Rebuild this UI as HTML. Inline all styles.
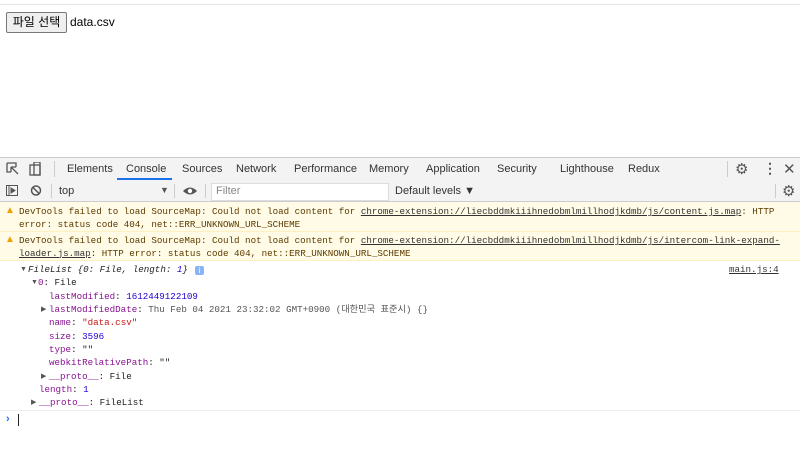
<!DOCTYPE html>
<html><head><meta charset="utf-8"><style>
body{margin:0;width:800px;height:460px;overflow:hidden;background:#fff;font-family:"Liberation Sans",sans-serif;position:relative}
.abs{position:absolute}
.mono{font-family:"Liberation Mono",monospace;font-size:9.2px;white-space:pre}
.l{position:absolute;font-family:"Liberation Mono",monospace;font-size:9.2px;white-space:pre;line-height:12px;color:#222}
.tab{position:absolute;top:163px;font-size:11px;color:#333}
.u{text-decoration:underline;color:#333}
.p{color:#881391}.n{color:#1c00cf}.s{color:#c41a16}.g{color:#555}
.tri{position:absolute;font-size:7px;color:#555;line-height:12px}
</style></head><body>
<div class="abs" style="left:0;top:4px;width:800px;height:1px;background:#e6e6e6"></div>
<div class="abs" style="left:6px;top:12px;width:59px;height:19px;border:1px solid #777;border-radius:2px;background:#efefef;font-family:'Liberation Sans','Noto Sans CJK KR',sans-serif;font-size:12px;line-height:19px;text-align:center">파일 선택</div>
<div class="abs" style="left:70px;top:15px;font-size:12px">data.csv</div>

<div class="abs" style="left:0;top:157px;width:800px;height:24px;background:#f3f3f3;border-top:1px solid #ccc;border-bottom:1px solid #ccc"></div>
<svg class="abs" style="left:6px;top:162px" width="40" height="14"><path d="M1 1h9v4M1 1v9h4M5 5l7 7M5 5v5M5 5h5" stroke="#555" fill="none" stroke-width="1.3"/><rect x="24" y="3" width="10" height="10" fill="none" stroke="#555" stroke-width="1.3"/><rect x="28" y="0" width="6" height="13" fill="none" stroke="#555" stroke-width="1.3"/></svg>
<div class="abs" style="left:54px;top:161px;width:1px;height:16px;background:#ccc"></div>
<div class="tab" style="left:67px">Elements</div>
<div class="tab" style="left:126px">Console</div>
<div class="abs" style="left:117px;top:178px;width:55px;height:2px;background:#1a73e8"></div>
<div class="tab" style="left:182px">Sources</div>
<div class="tab" style="left:236px">Network</div>
<div class="tab" style="left:294px">Performance</div>
<div class="tab" style="left:369px">Memory</div>
<div class="tab" style="left:426px">Application</div>
<div class="tab" style="left:497px">Security</div>
<div class="tab" style="left:560px">Lighthouse</div>
<div class="tab" style="left:628px">Redux</div>
<div class="abs" style="left:727px;top:161px;width:1px;height:16px;background:#ccc"></div>
<div class="abs" style="left:735px;top:160px;font-size:15px;color:#555">⚙</div>
<div class="abs" style="left:763px;top:160px;font-size:14px;color:#555;font-weight:bold">⋮</div>
<div class="abs" style="left:783px;top:160px;font-size:15px;color:#555">✕</div>

<div class="abs" style="left:0;top:182px;width:800px;height:19px;background:#f3f3f3;border-bottom:1px solid #ccc"></div>
<svg class="abs" style="left:6px;top:184px" width="40" height="14"><rect x="0.5" y="1.5" width="11" height="10" fill="none" stroke="#555"/><path d="M3 2v9M5 4l4 2.5-4 2.5z" stroke="#555" fill="#555"/><circle cx="30" cy="6.5" r="4.5" fill="none" stroke="#555" stroke-width="1.5"/><path d="M27 3.5l6 6" stroke="#555" stroke-width="1.5"/></svg>
<div class="abs" style="left:51px;top:184px;width:1px;height:14px;background:#ccc"></div>
<div class="abs" style="left:59px;top:185px;font-size:11px;color:#333">top</div>
<div class="abs" style="left:160px;top:185px;font-size:9px;color:#555">▼</div>
<div class="abs" style="left:174px;top:184px;width:1px;height:14px;background:#ccc"></div>
<svg class="abs" style="left:182px;top:186px" width="16" height="10"><path d="M1 5Q8-2 15 5Q8 12 1 5z" fill="#555"/><circle cx="8" cy="5" r="2.2" fill="#fff"/></svg>
<div class="abs" style="left:205px;top:184px;width:1px;height:14px;background:#ccc"></div>
<div class="abs" style="left:211px;top:183px;width:176px;height:16px;background:#fff;border:1px solid #ddd"></div>
<div class="abs" style="left:216px;top:185px;font-size:11px;color:#888">Filter</div>
<div class="abs" style="left:395px;top:185px;font-size:11px;color:#333">Default levels ▼</div>
<div class="abs" style="left:775px;top:184px;width:1px;height:14px;background:#ccc"></div>
<div class="abs" style="left:782px;top:182px;font-size:15px;color:#555">⚙</div>

<div class="abs" style="left:0;top:202px;width:800px;height:29px;background:#fffbe6;border-bottom:1px solid #fff0c0"></div>
<div class="abs" style="left:0;top:232px;width:800px;height:28px;background:#fffbe6;border-bottom:1px solid #fff0c0"></div>
<div class="abs" style="left:5px;top:205px;font-size:10px;color:#f0a000">▲</div>
<div class="abs" style="left:5px;top:234px;font-size:10px;color:#f0a000">▲</div>
<div class="abs mono" style="left:19px;top:206px;line-height:12.5px;color:#5c3b00">DevTools failed to load SourceMap: Could not load content for <span class="u">chrome-extension://liecbddmkiiihnedobmlmillhodjkdmb/js/content.js.map</span>: HTTP
error: status code 404, net::ERR_UNKNOWN_URL_SCHEME</div>
<div class="abs mono" style="left:19px;top:235px;line-height:12.5px;color:#5c3b00">DevTools failed to load SourceMap: Could not load content for <span class="u">chrome-extension://liecbddmkiiihnedobmlmillhodjkdmb/js/intercom-link-expand-</span>
<span class="u">loader.js.map</span>: HTTP error: status code 404, net::ERR_UNKNOWN_URL_SCHEME</div>

<div class="tri" style="left:20px;top:264px">▼</div>
<div class="l" style="left:28px;top:264px"><i>FileList {0: File, length: <span class="n">1</span>}</i></div>
<div class="abs" style="left:195px;top:266px;width:9px;height:9px;background:#8ab4f8;border-radius:2px;color:#fff;font-size:8px;line-height:9px;text-align:center">i</div>
<div class="tri" style="left:31px;top:277px">▼</div>
<div class="l" style="left:38px;top:277px"><span class="p">0</span>: File</div>
<div class="l" style="left:49px;top:291px"><span class="p">lastModified</span>: <span class="n">1612449122109</span></div>
<div class="tri" style="left:41px;top:304px">▶</div>
<div class="l" style="left:49px;top:304px"><span class="p">lastModifiedDate</span>: <span class="g">Thu Feb 04 2021 23:32:02 GMT+0900 (<span style="font-family:'Liberation Mono','Noto Sans CJK KR',monospace">대한민국 표준시</span>) {}</span></div>
<div class="l" style="left:49px;top:317px"><span class="p">name</span>: <span class="s">"data.csv"</span></div>
<div class="l" style="left:49px;top:331px"><span class="p">size</span>: <span class="n">3596</span></div>
<div class="l" style="left:49px;top:344px"><span class="p">type</span>: ""</div>
<div class="l" style="left:49px;top:357px"><span class="p">webkitRelativePath</span>: ""</div>
<div class="tri" style="left:41px;top:371px">▶</div>
<div class="l" style="left:49px;top:371px"><span class="p">__proto__</span>: File</div>
<div class="l" style="left:39px;top:384px"><span class="p">length</span>: <span class="n">1</span></div>
<div class="tri" style="left:31px;top:397px">▶</div>
<div class="l" style="left:39px;top:397px"><span class="p">__proto__</span>: FileList</div>
<div class="abs mono u" style="left:729px;top:264px">main.js:4</div>
<div class="abs" style="left:0;top:410px;width:800px;height:1px;background:#eee"></div>
<div class="abs" style="left:6px;top:413px;font-size:11px;color:#1a73e8;font-weight:bold">›</div>
<div class="abs" style="left:18px;top:414px;width:1px;height:12px;background:#222"></div>
</body></html>
